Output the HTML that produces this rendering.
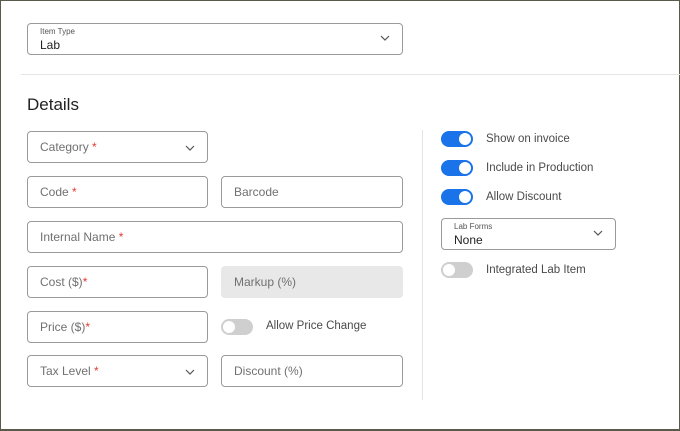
<!DOCTYPE html>
<html><head><style>
body{margin:0;width:680px;height:430px;overflow:hidden;background:#fff;font-family:"Liberation Sans",sans-serif;}
.frame{position:absolute;left:0;top:0;width:678px;height:428px;border:1px solid #5a5a4a;border-bottom-width:2px;border-right-width:1px;box-sizing:content-box}
.f{position:absolute;border:1px solid #9a9a9a;border-radius:4px;box-sizing:border-box;background:#fff}
.ph{position:absolute;left:12px;top:8px;font-size:12px;color:#707070}
.r{color:#e53935}
.lbl{position:absolute;left:12px;top:3px;font-size:8px;color:#555}
.val{position:absolute;left:12px;top:14px;font-size:12px;color:#222}
.ch{position:absolute;right:12px;top:9px;width:10px;height:8px}
.tg{position:absolute;width:32px;height:16px;border-radius:8px;background:#1a73e8}
.tg:after{content:"";position:absolute;right:2px;top:2px;width:12px;height:12px;border-radius:50%;background:#fff}
.tg.off{background:#cfcfcf}
.tg.off:after{right:auto;left:2px}
.tl{position:absolute;font-size:11.5px;color:#4a4a4a}
</style></head><body>
<div class="frame"></div>
<svg width="0" height="0" style="position:absolute"><defs><symbol id="c" viewBox="0 0 10 8"><path d="M1 2 L5 6 L9 2" fill="none" stroke="#555" stroke-width="1.2"/></symbol></defs></svg>
<div class="f" style="left:27px;top:23px;width:376px;height:32px"><div class="lbl">Item Type</div><div class="val">Lab</div><svg class="ch" style="top:10px"><use href="#c"/></svg></div>
<div style="position:absolute;left:21px;top:74px;width:659px;height:1px;background:#e4e4e4"></div>
<div style="position:absolute;left:27px;top:95px;font-size:17px;color:#222">Details</div>
<div style="position:absolute;left:422px;top:130px;width:1px;height:270px;background:#e4e4e4"></div>
<div class="f" style="left:27px;top:131px;width:181px;height:32px"><div class="ph">Category <span class="r">*</span></div><svg class="ch" style="top:12px"><use href="#c"/></svg></div>
<div class="f" style="left:27px;top:176px;width:181px;height:32px"><div class="ph">Code <span class="r">*</span></div></div>
<div class="f" style="left:221px;top:176px;width:182px;height:32px"><div class="ph">Barcode</div></div>
<div class="f" style="left:27px;top:221px;width:376px;height:32px"><div class="ph">Internal Name <span class="r">*</span></div></div>
<div class="f" style="left:27px;top:266px;width:181px;height:32px"><div class="ph">Cost ($)<span class="r">*</span></div></div>
<div class="f" style="left:221px;top:266px;width:182px;height:32px;background:#e8e8e8;border-color:#e8e8e8"><div class="ph">Markup (%)</div></div>
<div class="f" style="left:27px;top:311px;width:181px;height:32px"><div class="ph">Price ($)<span class="r">*</span></div></div>
<div class="tg off" style="left:221px;top:319px"></div><div class="tl" style="left:266px;top:320px">Allow Price Change</div>
<div class="f" style="left:27px;top:355px;width:181px;height:32px"><div class="ph">Tax Level <span class="r">*</span></div><svg class="ch" style="top:12px"><use href="#c"/></svg></div>
<div class="f" style="left:221px;top:355px;width:182px;height:32px"><div class="ph">Discount (%)</div></div>
<div class="tg" style="left:441px;top:131px"></div><div class="tl" style="left:486px;top:133px">Show on invoice</div>
<div class="tg" style="left:441px;top:160px"></div><div class="tl" style="left:486px;top:162px">Include in Production</div>
<div class="tg" style="left:441px;top:189px"></div><div class="tl" style="left:486px;top:191px">Allow Discount</div>
<div class="f" style="left:441px;top:218px;width:175px;height:32px"><div class="lbl">Lab Forms</div><div class="val">None</div><svg class="ch" style="top:10px"><use href="#c"/></svg></div>
<div class="tg off" style="left:441px;top:262px"></div><div class="tl" style="left:486px;top:264px">Integrated Lab Item</div>
</body></html>
